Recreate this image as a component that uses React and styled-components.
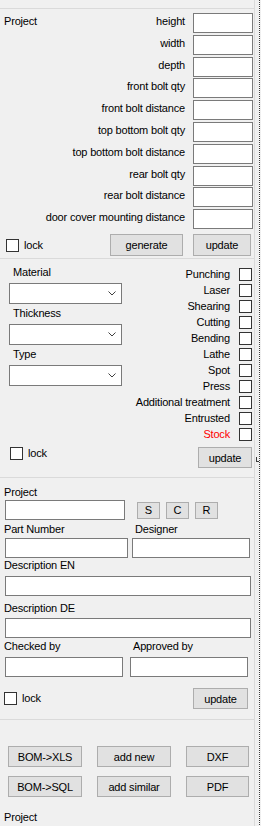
import React from 'react';
import styled, { createGlobalStyle } from 'styled-components';

const GlobalStyle = createGlobalStyle`
  html, body {
    margin: 0;
    padding: 0;
    background: #f0f0f0;
  }
  body {
    font-family: 'Liberation Sans', Arial, sans-serif;
    font-size: 11px;
    letter-spacing: -0.18px;
    color: #000;
  }
  * {
    box-sizing: border-box;
  }
`;

const dimensions = [
  'height',
  'width',
  'depth',
  'front bolt qty',
  'front bolt distance',
  'top bottom bolt qty',
  'top bottom bolt distance',
  'rear bolt qty',
  'rear bolt distance',
  'door cover mounting distance',
];

const operations = [
  'Punching',
  'Laser',
  'Shearing',
  'Cutting',
  'Bending',
  'Lathe',
  'Spot',
  'Press',
  'Additional treatment',
  'Entrusted',
  'Stock',
];

export default function App() {
  return (
    <>
      <GlobalStyle />
      <Window>
        <Column>
          <Panel $h={9} />

          {/* dimensions */}
          <Panel $h={250} $pad="4px 1px 0 0">
            <SizeGrid>
              <Caption>Project</Caption>
              {dimensions.map((d) => (
                <React.Fragment key={d}>
                  <SizeLabel>{d}</SizeLabel>
                  <TextBox $w={60} $col={3} />
                </React.Fragment>
              ))}
            </SizeGrid>
            <LockRow $mt={5} $h={22} $pl={6} $align="center">
              <CheckBox />
              <LockText>lock</LockText>
              <Button $w={73} $h={22} $ml="auto">generate</Button>
              <Button $w={58} $h={22} $ml="10px" $mr={2}>update</Button>
            </LockRow>
          </Panel>

          {/* material + operations */}
          <Panel $h={219} $pad="6.5px 0 0 0">
            <MaterialGrid>
              <ComboColumn>
                {['Material', 'Thickness', 'Type'].map((l) => (
                  <React.Fragment key={l}>
                    <ComboLabel>{l}</ComboLabel>
                    <Combo>
                      <svg width="8" height="5" viewBox="0 0 8 5">
                        <polyline points="0.5,0.5 4,4 7.5,0.5" fill="none" stroke="#404040" strokeWidth="1" />
                      </svg>
                    </Combo>
                  </React.Fragment>
                ))}
              </ComboColumn>
              <CheckList>
                {operations.map((o) => (
                  <CheckRow key={o}>
                    <CheckLabel $red={o === 'Stock'}>{o}</CheckLabel>
                    <CheckBox />
                  </CheckRow>
                ))}
              </CheckList>
            </MaterialGrid>
            <LockRow $mt={3} $h={21} $pl={10} $align="flex-start">
              <CheckBox />
              <LockText>lock</LockText>
              <Button $w={54} $h={21} $ml="auto" $mr={2}>update</Button>
            </LockRow>
          </Panel>

          {/* part info */}
          <Panel $h={242} $pad="7.5px 0 0 0">
            <FieldLabel $ml={4} $mb={1.5}>Project</FieldLabel>
            <FlexRow>
              <TextBox $w={120} $ml={5} />
              <MiniButtons>
                <MiniButton>S</MiniButton>
                <MiniButton>C</MiniButton>
                <MiniButton>R</MiniButton>
              </MiniButtons>
            </FlexRow>

            <FlexRow $mt={2.5}>
              <Field $w={132}>
                <FieldLabel $ml={4} $mb={2.5}>Part Number</FieldLabel>
                <TextBox $w={123} $ml={5} />
              </Field>
              <Field>
                <FieldLabel $ml={3} $mb={2.5}>Designer</FieldLabel>
                <TextBox $w={118} />
              </Field>
            </FlexRow>

            <FieldLabel $ml={4} $mt={0.5} $mb={4.5}>Description EN</FieldLabel>
            <TextBox $w={246} $ml={5} />

            <FieldLabel $ml={4} $mt={5.5} $mb={3.5}>Description DE</FieldLabel>
            <TextBox $w={246} $ml={5} />

            <FlexRow $mt={1.5}>
              <Field $w={130}>
                <FieldLabel $ml={4} $mb={4.5}>Checked by</FieldLabel>
                <TextBox $w={118} $ml={5} />
              </Field>
              <Field>
                <FieldLabel $ml={3} $mb={4.5}>Approved by</FieldLabel>
                <TextBox $w={118} />
              </Field>
            </FlexRow>

            <LockRow $mt={11} $h={21} $pl={4} $align="center">
              <CheckBox />
              <LockText>lock</LockText>
              <Button $w={55} $h={21} $ml="auto" $mr={6}>update</Button>
            </LockRow>
          </Panel>

          {/* export actions */}
          <Panel $grow $pad="26px 0 0 8px" $noBottom>
            <ActionRow>
              <Button $w={74} $h={21}>BOM-&gt;XLS</Button>
              <Button $w={74} $h={21}>add new</Button>
              <Button $w={63} $h={21}>DXF</Button>
            </ActionRow>
            <ActionRow $mt={9}>
              <Button $w={74} $h={21}>BOM-&gt;SQL</Button>
              <Button $w={74} $h={21}>add similar</Button>
              <Button $w={63} $h={21}>PDF</Button>
            </ActionRow>
            <FieldLabel $ml={-4} $mt={13.5}>Project</FieldLabel>
          </Panel>
        </Column>
        <Splitter>
          <Grip />
        </Splitter>
      </Window>
    </>
  );
}

/// styled components:

const Window = styled.div`
  display: flex;
  width: 261px;
  height: 826px;
  overflow: hidden;
  background: #f0f0f0;
`;

const Column = styled.div`
  width: 255px;
  flex: none;
  display: flex;
  flex-direction: column;
`;

const Splitter = styled.div`
  position: relative;
  width: 1px;
  margin-left: 4px;
  background: repeating-linear-gradient(to bottom, #3c3c3c 0 1px, #fbfbfb 1px 2px);
`;

const Grip = styled.span`
  position: absolute;
  left: -3px;
  top: 457px;
  width: 3px;
  height: 5px;
  border-left: 1px solid #3c3c3c;
  border-bottom: 1px solid #3c3c3c;
`;

const Panel = styled.section`
  flex: ${(p) => (p.$grow ? '1' : 'none')};
  height: ${(p) => (p.$h ? `${p.$h}px` : 'auto')};
  padding: ${(p) => p.$pad || '0'};
  border-right: 1px solid #dadada;
  border-bottom: ${(p) => (p.$noBottom ? 'none' : '1px solid #dadada')};
`;

const SizeGrid = styled.div`
  display: grid;
  grid-template-columns: auto 1fr 60px;
  grid-auto-rows: 20px;
  column-gap: 8px;
  row-gap: 1.8px;
`;

const Caption = styled.div`
  grid-column: 1;
  padding: 2px 0 0 4px;
  line-height: 13px;
`;

const SizeLabel = styled.div`
  grid-column: 2;
  padding-top: 2px;
  line-height: 13px;
  text-align: right;
  white-space: nowrap;
`;

const TextBox = styled.div`
  grid-column: ${(p) => p.$col || 'auto'};
  width: ${(p) => p.$w}px;
  height: 20px;
  margin-left: ${(p) => p.$ml || 0}px;
  background: #fff;
  border: 1px solid #7a7a7a;
  flex: none;
`;

const LockRow = styled.div`
  display: flex;
  align-items: ${(p) => p.$align};
  height: ${(p) => p.$h}px;
  margin-top: ${(p) => p.$mt}px;
  padding-left: ${(p) => p.$pl}px;
`;

const CheckBox = styled.span`
  display: block;
  flex: none;
  width: 13px;
  height: 13px;
  background: #fff;
  border: 1px solid #333;
`;

const LockText = styled.span`
  margin-left: 5px;
  line-height: 13px;
`;

const Button = styled.button`
  flex: none;
  width: ${(p) => p.$w}px;
  height: ${(p) => p.$h}px;
  margin-left: ${(p) => p.$ml || 0};
  margin-right: ${(p) => p.$mr || 0}px;
  padding: 0;
  background: #e1e1e1;
  border: 1px solid #adadad;
  border-radius: 0;
  font: inherit;
  letter-spacing: inherit;
  color: #000;
  text-align: center;
  white-space: nowrap;
`;

const MaterialGrid = styled.div`
  display: grid;
  grid-template-columns: 113px 1fr;
  align-items: start;
  padding-left: 9px;
`;

const ComboColumn = styled.div`
  display: flex;
  flex-direction: column;
`;

const ComboLabel = styled.div`
  margin: 0 0 4.5px 4px;
  line-height: 13px;
`;

const Combo = styled.div`
  display: flex;
  align-items: center;
  justify-content: flex-end;
  width: 113px;
  height: 21px;
  margin-bottom: 2.5px;
  padding-right: 5px;
  background: #fff;
  border: 1px solid #7a7a7a;
`;

const CheckList = styled.div`
  display: flex;
  flex-direction: column;
  margin-top: 2.5px;
`;

const CheckRow = styled.div`
  display: flex;
  justify-content: flex-end;
  align-items: flex-start;
  gap: 9px;
  height: 16px;
  padding-right: 2px;
`;

const CheckLabel = styled.span`
  line-height: 13px;
  white-space: nowrap;
  color: ${(p) => (p.$red ? '#ff0000' : '#000')};
`;

const FieldLabel = styled.div`
  line-height: 13px;
  margin-left: ${(p) => p.$ml || 0}px;
  margin-top: ${(p) => p.$mt || 0}px;
  margin-bottom: ${(p) => p.$mb || 0}px;
  white-space: nowrap;
`;

const FlexRow = styled.div`
  display: flex;
  align-items: center;
  margin-top: ${(p) => p.$mt || 0}px;
`;

const Field = styled.div`
  display: flex;
  flex-direction: column;
  width: ${(p) => (p.$w ? `${p.$w}px` : 'auto')};
  flex: none;
`;

const MiniButtons = styled.div`
  display: flex;
  gap: 6px;
  margin-left: 12px;
`;

const MiniButton = styled.button`
  width: 23px;
  height: 17px;
  padding: 0;
  background: #e1e1e1;
  border: 1px solid #adadad;
  border-radius: 0;
  font: inherit;
  color: #000;
`;

const ActionRow = styled.div`
  display: flex;
  gap: 15px;
  margin-top: ${(p) => p.$mt || 0}px;
`;
